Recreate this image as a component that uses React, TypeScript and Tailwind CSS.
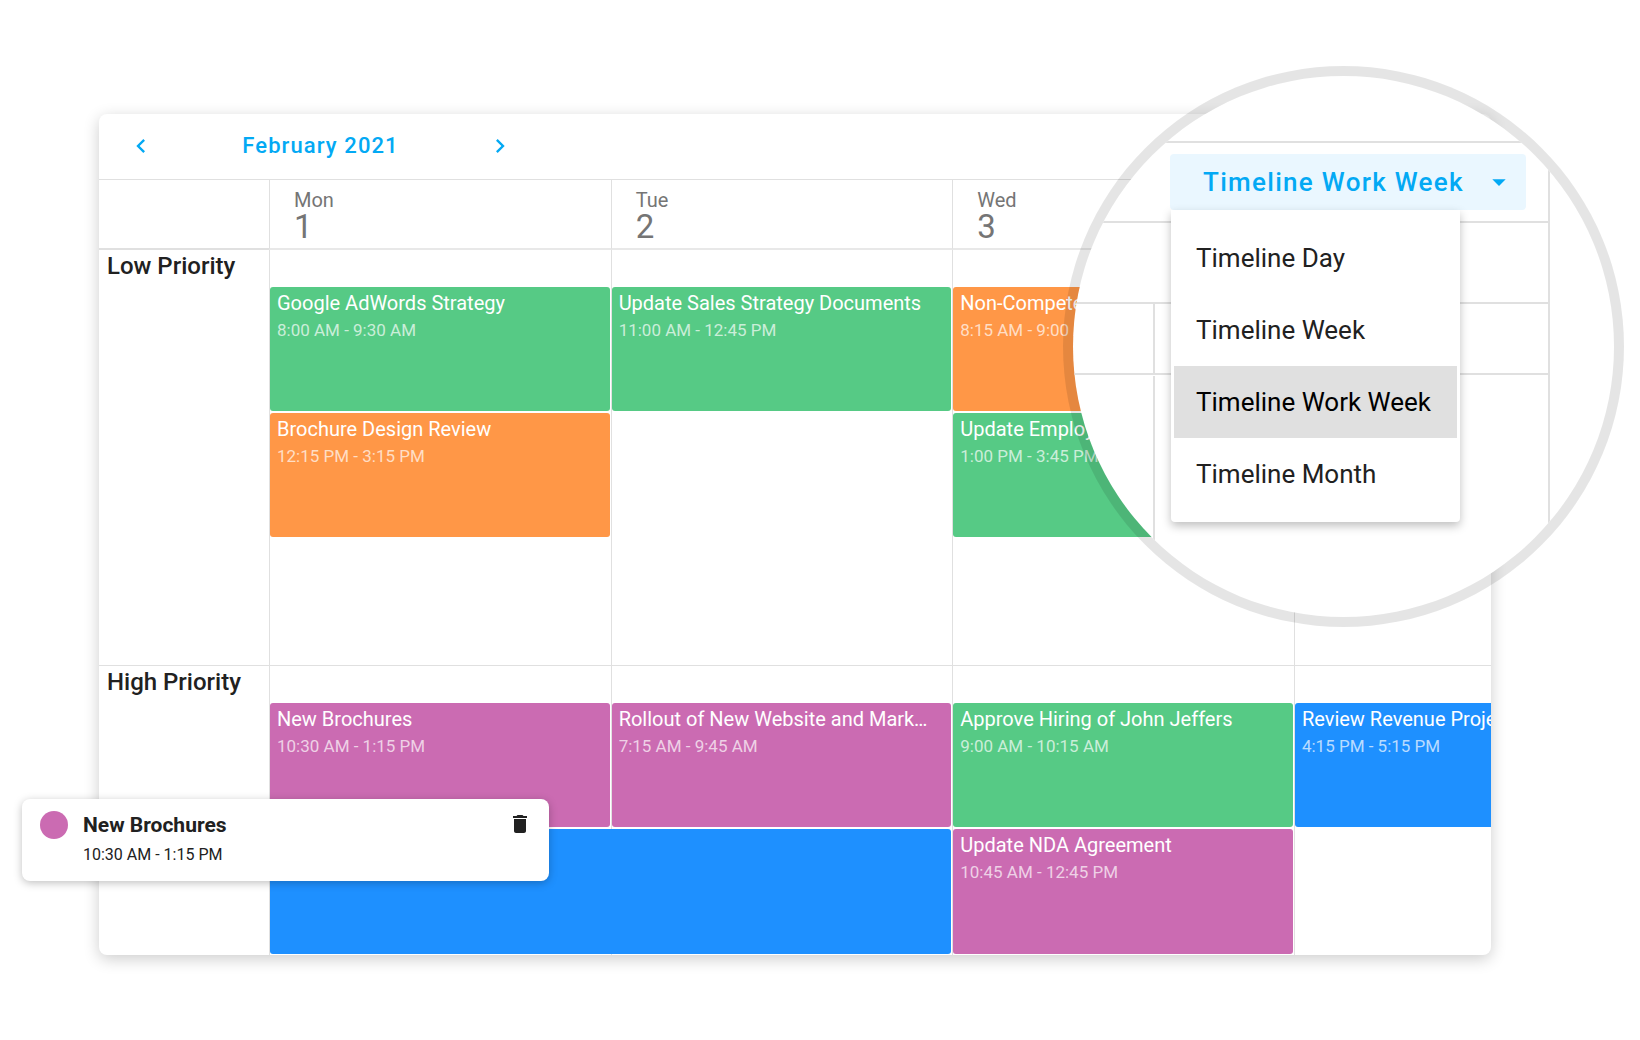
import { useState } from 'react';
import { MdArrowDropDown, MdChevronLeft, MdChevronRight, MdDelete } from 'react-icons/md';

interface Appointment {
    title?: string;
    time?: string;
    color: string;
    place: string;
}

interface Group {
    name: string;
    rows: string;
    appointments: Appointment[];
}

const GREEN = 'bg-[#56ca85]';
const ORANGE = 'bg-[#ff9747]';
const PINK = 'bg-[#cb6bb2]';
const BLUE = 'bg-[#1e90ff]';

const columns = 'grid w-[135%] grid-cols-[171px_repeat(5,minmax(0,1fr))]';
const columnStarts = ['col-start-2', 'col-start-3', 'col-start-4', 'col-start-5'];

const days = [
    { name: 'Mon', date: 1 },
    { name: 'Tue', date: 2 },
    { name: 'Wed', date: 3 },
];

const groups: Group[] = [
    {
        name: 'Low Priority',
        rows: 'grid-rows-[36px_126px_126px_127px] border-b border-[#e0e0e0]',
        appointments: [
            { title: 'Google AdWords Strategy', time: '8:00 AM - 9:30 AM', color: GREEN, place: 'col-start-2 row-start-2' },
            { title: 'Update Sales Strategy Documents', time: '11:00 AM - 12:45 PM', color: GREEN, place: 'col-start-3 row-start-2' },
            { title: 'Non-Compete', time: '8:15 AM - 9:00 AM', color: ORANGE, place: 'col-start-4 row-start-2' },
            { title: 'Brochure Design Review', time: '12:15 PM - 3:15 PM', color: ORANGE, place: 'col-start-2 row-start-3' },
            { title: 'Update Employee', time: '1:00 PM - 3:45 PM', color: GREEN, place: 'col-start-4 row-start-3' },
        ],
    },
    {
        name: 'High Priority',
        rows: 'grid-rows-[36px_126px_127px]',
        appointments: [
            { title: 'New Brochures', time: '10:30 AM - 1:15 PM', color: PINK, place: 'col-start-2 row-start-2' },
            { title: 'Rollout of New Website and Marketing Brochures', time: '7:15 AM - 9:45 AM', color: PINK, place: 'col-start-3 row-start-2' },
            { title: 'Approve Hiring of John Jeffers', time: '9:00 AM - 10:15 AM', color: GREEN, place: 'col-start-4 row-start-2' },
            { title: 'Review Revenue Projections', time: '4:15 PM - 5:15 PM', color: BLUE, place: 'col-start-5 row-start-2' },
            { color: BLUE, place: 'col-start-2 col-span-2 row-start-3' },
            { title: 'Update NDA Agreement', time: '10:45 AM - 12:45 PM', color: PINK, place: 'col-start-4 row-start-3' },
        ],
    },
];

const views = ['Timeline Day', 'Timeline Week', 'Timeline Work Week', 'Timeline Month'];

function GroupRow({ group }: { group: Group }) {
    return (
        <section className={`${columns} ${group.rows}`}>
            <h2 className="col-start-1 row-span-full pl-2 text-2xl font-medium text-[#212121]">{group.name}</h2>
            {columnStarts.map(start => (
                <div key={start} className={`${start} row-start-1 -row-end-1 -ml-px border-l border-[#e0e0e0]`} />
            ))}
            {group.appointments.map(item => (
                <article
                    key={item.place}
                    className={`${item.place} ${item.color} mt-px mr-[2px] mb-px min-w-0 rounded-[3px] pt-[3px] pr-4 pl-[7px] text-white`}
                >
                    {item.title && <h3 className="truncate text-xl leading-[26px]">{item.title}</h3>}
                    {item.time && <p className="truncate text-[17px] leading-7 text-white/70">{item.time}</p>}
                </article>
            ))}
        </section>
    );
}

function Scheduler() {
    return (
        <main className="overflow-hidden rounded-lg bg-white shadow-[0_4px_16px_rgba(0,0,0,0.2)]">
            <div className="border-b border-[#e0e0e0] pt-[18px] pb-[19px] pl-7">
                <nav className="flex w-[387px] items-center justify-between text-[#03a9f4]">
                    <button type="button" aria-label="Previous week">
                        <MdChevronLeft className="size-7" />
                    </button>
                    <button type="button" className="text-[22px] leading-7 font-medium tracking-wider">February 2021</button>
                    <button type="button" aria-label="Next week">
                        <MdChevronRight className="size-7" />
                    </button>
                </nav>
            </div>

            {/* Day headers */}
            <div className={`${columns} h-[70px]`}>
                <div className="border-b-2 border-[#e0e0e0]" />
                {days.map(day => (
                    <div key={day.name} className="-ml-px border-b-2 border-l border-b-[#e8e8e8] border-l-[#e0e0e0] pt-2 pl-6 text-[#757575]">
                        <div className="text-xl leading-6">{day.name}</div>
                        <div className="text-[33px] leading-[30px]">{day.date}</div>
                    </div>
                ))}
                <div className="-ml-px border-b-2 border-l border-[#e0e0e0]" />
            </div>

            {groups.map(group => (
                <GroupRow key={group.name} group={group} />
            ))}
        </main>
    );
}

function ViewSwitcher() {
    const [view, setView] = useState('Timeline Work Week');
    const [open, setOpen] = useState(true);

    return (
        <div className="relative w-[356px]">
            <button
                type="button"
                aria-haspopup="menu"
                aria-expanded={open}
                onClick={() => setOpen(!open)}
                className="flex h-14 w-full items-center justify-between rounded bg-[#eaf7ff] pr-[11px] pl-[33px] text-[26px] font-medium tracking-wider text-[#03a9f4]"
            >
                {view}
                <MdArrowDropDown className="size-8" />
            </button>
            {open && (
                <ul role="menu" className="absolute top-full left-px w-[289px] rounded-b bg-white px-[3px] py-3 shadow-[0_4px_10px_rgba(0,0,0,0.25)]">
                    {views.map(name => (
                        <li key={name} role="none">
                            <button
                                type="button"
                                role="menuitem"
                                onClick={() => setView(name)}
                                className={`h-[72px] w-full pl-[22px] text-left text-[26px] ${name === view ? 'bg-[#e0e0e0] text-black' : 'text-[#212121]'}`}
                            >
                                {name}
                            </button>
                        </li>
                    ))}
                </ul>
            )}
        </div>
    );
}

function Lens() {
    return (
        <div className="absolute top-[66px] right-4 size-[561px] overflow-hidden rounded-full border-10 border-black/10 bg-white bg-clip-padding pt-[65px] pr-16">
            <div className="flex h-full flex-col border-t-2 border-r-2 border-[#e0e0e0]">
                <div className="z-10 h-20 border-b-2 border-[#e0e0e0] pt-[11px] pl-[97px]">
                    <ViewSwitcher />
                </div>
                <div className="h-[81px] border-b-2 border-[#e0e0e0]" />
                <div className="h-[71px] border-b-2 border-[#e0e0e0] pl-20">
                    <div className="h-full border-l-2 border-[#e0e0e0]" />
                </div>
                <div className="flex-1 pt-px pl-20">
                    <div className="h-full border-l-2 border-[#e0e0e0]" />
                </div>
            </div>
        </div>
    );
}

function AppointmentTooltip() {
    return (
        <aside className="absolute top-[799px] left-[22px] flex w-[527px] items-start rounded-lg bg-white px-[17px] pt-3 pb-[10px] shadow-[0_2px_8px_rgba(0,0,0,0.25)]">
            <span className="mr-[15px] ml-px size-7 rounded-full bg-[#cb6bb2]" />
            <div className="flex-1 text-[#212121]">
                <h3 className="text-[21px] leading-7 font-bold">New Brochures</h3>
                <p className="text-base leading-8">10:30 AM - 1:15 PM</p>
            </div>
            <button type="button" aria-label="Delete appointment" className="mt-px text-[#212121]">
                <MdDelete className="size-6" />
            </button>
        </aside>
    );
}

export default function App() {
    return (
        <div className="relative min-h-screen overflow-hidden bg-white pt-[114px] pr-[149px] pb-20 pl-[99px] font-['Roboto',sans-serif]">
            <Scheduler />
            <Lens />
            <AppointmentTooltip />
        </div>
    );
}
